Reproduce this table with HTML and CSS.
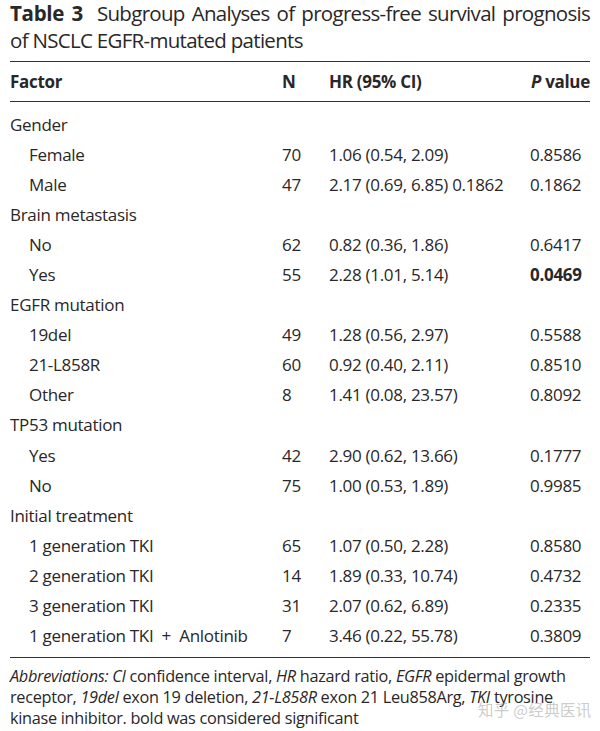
FILE: index.html
```html
<!DOCTYPE html>
<html>
<head>
<meta charset="utf-8">
<link rel="stylesheet" href="styles.css">
</head>
<body>
<div class="page">
  <div class="title"><b>Table 3</b>&nbsp; Subgroup Analyses of progress-free survival prognosis of NSCLC EGFR-mutated patients</div>
  <div class="table">
    <div class="row head">
      <div>Factor</div><div>N</div><div>HR (95% CI)</div><div class="pv"><i>P</i> value</div>
    </div>
    <div class="body">
      <div class="row"><div>Gender</div></div>
      <div class="row"><div class="ind">Female</div><div>70</div><div>1.06 (0.54, 2.09)</div><div>0.8586</div></div>
      <div class="row"><div class="ind">Male</div><div>47</div><div>2.17 (0.69, 6.85) 0.1862</div><div>0.1862</div></div>
      <div class="row"><div>Brain metastasis</div></div>
      <div class="row"><div class="ind">No</div><div>62</div><div>0.82 (0.36, 1.86)</div><div>0.6417</div></div>
      <div class="row"><div class="ind">Yes</div><div>55</div><div>2.28 (1.01, 5.14)</div><div class="bold">0.0469</div></div>
      <div class="row"><div>EGFR mutation</div></div>
      <div class="row"><div class="ind">19del</div><div>49</div><div>1.28 (0.56, 2.97)</div><div>0.5588</div></div>
      <div class="row"><div class="ind">21-L858R</div><div>60</div><div>0.92 (0.40, 2.11)</div><div>0.8510</div></div>
      <div class="row"><div class="ind">Other</div><div>8</div><div>1.41 (0.08, 23.57)</div><div>0.8092</div></div>
      <div class="row"><div>TP53 mutation</div></div>
      <div class="row"><div class="ind">Yes</div><div>42</div><div>2.90 (0.62, 13.66)</div><div>0.1777</div></div>
      <div class="row"><div class="ind">No</div><div>75</div><div>1.00 (0.53, 1.89)</div><div>0.9985</div></div>
      <div class="row"><div>Initial treatment</div></div>
      <div class="row"><div class="ind">1 generation TKI</div><div>65</div><div>1.07 (0.50, 2.28)</div><div>0.8580</div></div>
      <div class="row"><div class="ind">2 generation TKI</div><div>14</div><div>1.89 (0.33, 10.74)</div><div>0.4732</div></div>
      <div class="row"><div class="ind">3 generation TKI</div><div>31</div><div>2.07 (0.62, 6.89)</div><div>0.2335</div></div>
      <div class="row"><div class="ind">1 generation TKI&ensp;+&ensp;Anlotinib</div><div>7</div><div>3.46 (0.22, 55.78)</div><div>0.3809</div></div>
    </div>
  </div>
  <div class="foot"><i>Abbreviations: CI</i> confidence interval, <i>HR</i> hazard ratio, <i>EGFR</i> epidermal growth receptor, <i>19del</i> exon 19 deletion, <i>21-L858R</i> exon 21 Leu858Arg, <i>TKI</i> tyrosine kinase inhibitor. bold was considered significant</div>
  <div class="wm">知乎 @经典医讯</div>
</div>
</body>
</html>
```
FILE: styles.css
```css
html, body {
  margin: 0;
  padding: 0;
  background: #fff;
}
.page {
  position: relative;
  width: 580px;
  padding: 0 10px;
  font-family: "Open Sans", "Noto Sans", sans-serif;
  color: #2a2728;
}
.title {
  font-size: 20.5px;
  line-height: 27px;
  padding-top: 0;
  text-align: justify;
  letter-spacing: -0.7px;
}
.title b {
  font-weight: 700;
  letter-spacing: -0.3px;
}
.table {
  margin-top: 7px;
  border-top: 1.5px solid #333;
  border-bottom: 1.5px solid #333;
}
.row {
  display: grid;
  grid-template-columns: 272px 47px 201px 60px;
  height: 30.1px;
  align-items: center;
  font-size: 17px;
  letter-spacing: -0.3px;
}
.row.head {
  height: 39px;
  font-weight: 700;
  border-bottom: 1.5px solid #333;
}
.pv {
  text-align: right;
}
.pv i {
  font-style: italic;
}
.body {
  padding: 7px 0 6.5px;
}
.ind {
  padding-left: 19px;
}
.bold {
  font-weight: 700;
}
.foot {
  font-size: 16.3px;
  line-height: 21px;
  padding-top: 8px;
  letter-spacing: -0.3px;
}
.wm {
  position: absolute;
  left: 478px;
  top: 698px;
  white-space: nowrap;
  font-family: "Noto Sans CJK SC", sans-serif;
  font-size: 15.5px;
  line-height: 22px;
  color: rgba(160, 160, 160, 0.55);
  letter-spacing: 0.3px;
}
```
